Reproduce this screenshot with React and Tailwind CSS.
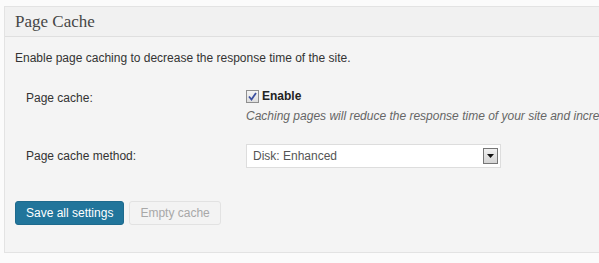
import React from "react";

export default function App() {
  const sans = { fontFamily: '"Liberation Sans", Arial, sans-serif' };
  return (
    <div className="w-[599px] h-[263px] overflow-hidden bg-[#fbfbfb] pt-[6px] pl-[4px]" style={sans}>
      <div className="w-[640px] h-[247px] border border-[#e3e3e3] bg-[#f4f4f4] flex flex-col">
        <div className="h-[30px] border-b border-[#dfdfdf] bg-[#f1f1f1] flex items-center pl-[10px]">
          <span className="text-[17px] text-[#464646] leading-none" style={{ fontFamily: '"Liberation Serif", Georgia, serif' }}>Page Cache</span>
        </div>
        <div className="pl-[10px] pt-[13px] text-[12px] text-[#333] leading-[16px]">
          <p>Enable page caching to decrease the response time of the site.</p>
          <div className="mt-[22px] flex">
            <div className="w-[231px] shrink-0 pl-[11px] pt-[2px]">Page cache:</div>
            <div className="flex flex-col min-w-0">
              <label className="flex items-center gap-[3px]">
                <span className="w-[13px] h-[13px] border border-[#8f8f8f] bg-gradient-to-b from-[#f4f4f4] to-[#dedede] flex items-center justify-center">
                  <svg width="9" height="9" viewBox="0 0 9 9">
                    <path d="M1 4.5 L3.5 7.5 L8 1" stroke="#3b4fa0" strokeWidth="1.8" fill="none" />
                  </svg>
                </span>
                <span className="font-bold text-[#222]">Enable</span>
              </label>
              <span className="mt-[4px] italic text-[#666] whitespace-nowrap">Caching pages will reduce the response time of your site and incre</span>
            </div>
          </div>
          <div className="mt-[20px] flex items-center">
            <div className="w-[231px] shrink-0 pl-[11px]">Page cache method:</div>
            <div className="w-[255px] h-[24px] border border-[#dddddd] bg-white flex items-center justify-between pl-[6px] pr-[2px]">
              <span className="text-[#555]">Disk: Enhanced</span>
              <span className="w-[15px] h-[16px] border border-[#767676] bg-gradient-to-b from-[#f0f0f0] to-[#d4d4d4] flex items-center justify-center">
                <svg width="7" height="4" viewBox="0 0 7 4"><path d="M0 0 L7 0 L3.5 4 Z" fill="#111" /></svg>
              </span>
            </div>
          </div>
          <div className="mt-[33px] flex gap-[5px]">
            <button className="h-[24px] px-[10px] rounded-[3px] bg-[#21759b] border border-[#1e6a8d] text-white text-[12px]">Save all settings</button>
            <button className="h-[24px] px-[10px] rounded-[3px] bg-[#f3f3f3] border border-[#e2e2e2] text-[#a8a8a8] text-[12px]">Empty cache</button>
          </div>
        </div>
      </div>
    </div>
  );
}
